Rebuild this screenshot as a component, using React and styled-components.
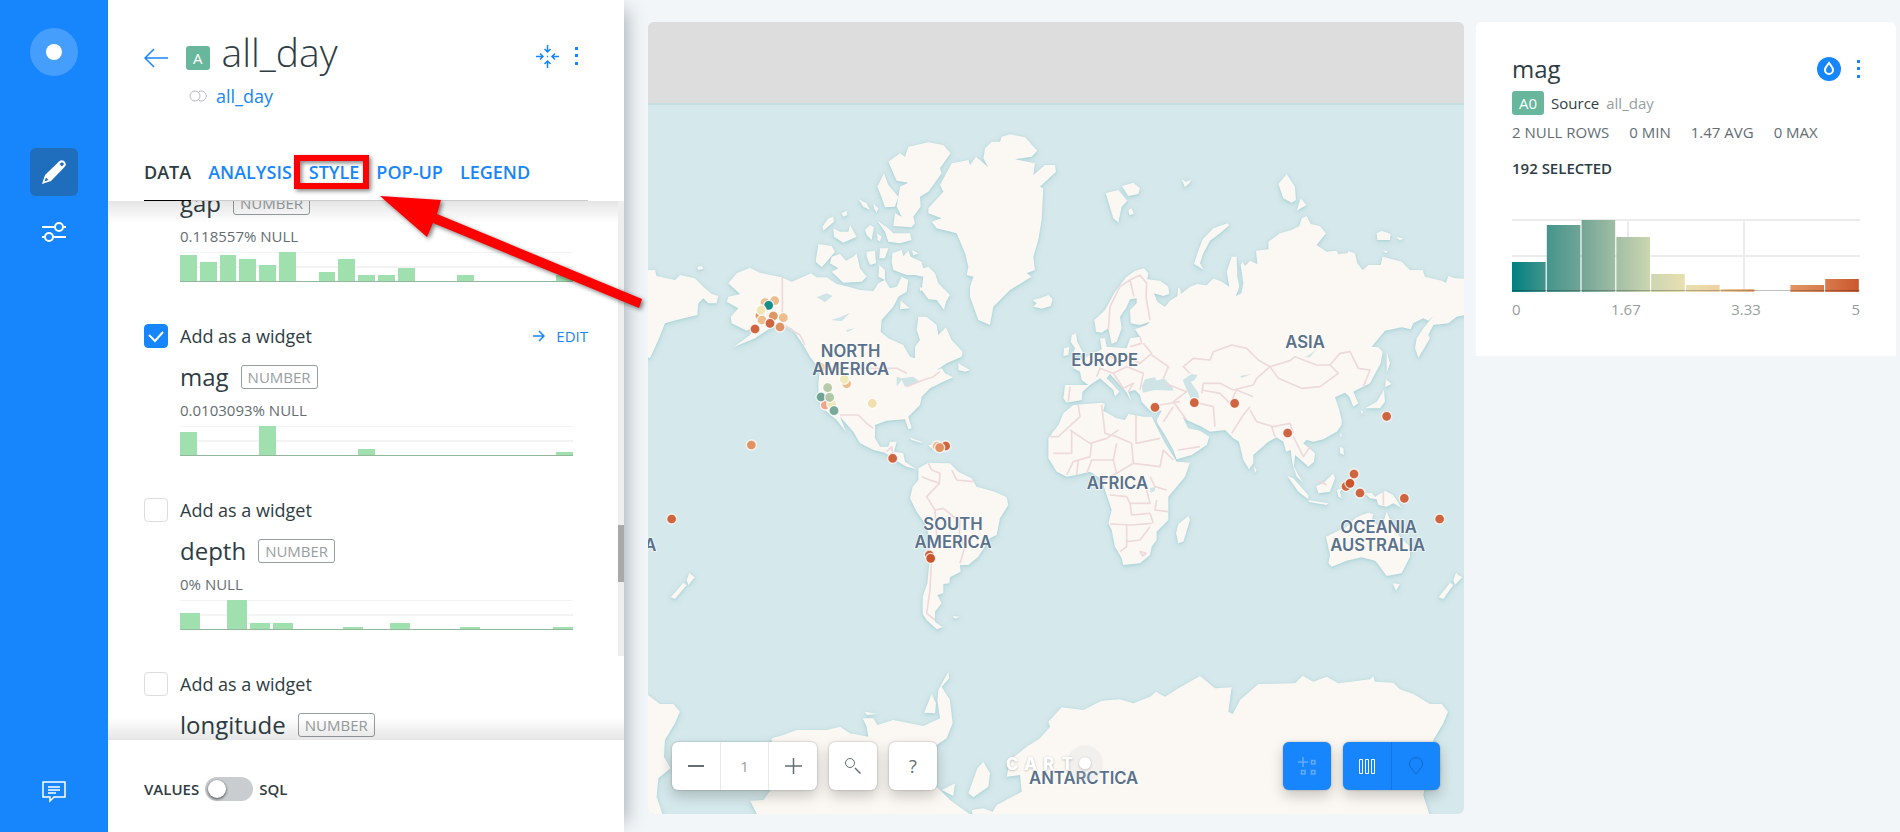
import React, { useState } from 'react';
import styled, { createGlobalStyle, css } from 'styled-components';

const GlobalStyle = createGlobalStyle`
  * {
    box-sizing: border-box;
  }

  body {
    margin: 0;
    background: #f2f6f9;
    color: #2e3c43;
    font-family: "Open Sans", "Noto Sans", sans-serif;
    font-size: 15px;
    line-height: 24px;
  }

  button, input {
    font: inherit;
  }

  a {
    color: #1785fb;
    text-decoration: none;
  }
`;

const Page = styled.div`
  position: relative;
  display: flex;
  height: 100vh;
  overflow: hidden;
`;

const Sidebar = styled.nav`
  display: flex;
  flex-direction: column;
  align-items: center;
  width: 108px;
  padding: 28px 0 4px;
  background: #1785fb;
`;

const Avatar = styled.a`
  display: flex;
  align-items: center;
  justify-content: center;
  width: 48px;
  height: 48px;
  margin-bottom: 72px;
  border-radius: 50%;
  background: #459dfc;

  &::after {
    content: '';
    width: 16px;
    height: 16px;
    border-radius: 50%;
    background: #fff;
  }
`;

const SideButton = styled.button`
  display: flex;
  align-items: center;
  justify-content: center;
  width: 48px;
  height: 48px;
  margin-bottom: 12px;
  margin-top: ${({ $last }) => ($last ? 'auto' : '0')};
  padding: 0;
  border: 0;
  border-radius: 6px;
  background: ${({ $active }) => ($active ? '#1f6dbd' : 'transparent')};
  cursor: pointer;
`;

const Panel = styled.section`
  position: relative;
  display: flex;
  flex-direction: column;
  width: 516px;
  background: #fff;
  box-shadow: 12px 0 18px -10px rgba(46, 60, 67, 0.4);
`;

const PanelHeader = styled.header`
  padding: 30px 36px 0;
`;

const TitleRow = styled.div`
  display: flex;
  align-items: center;
  height: 56px;
`;

const IconButton = styled.button`
  display: flex;
  padding: 0;
  border: 0;
  background: none;
  cursor: pointer;
`;

const Actions = styled.div`
  display: flex;
  align-items: center;
  gap: 16px;
  margin-left: auto;
`;

const LayerActions = styled(Actions)`
  padding: 0 10px 4px 0;
`;

const Badge = styled.span`
  height: 24px;
  padding: 0 7px;
  border-radius: 3px;
  background: #68b69c;
  color: #fff;
  line-height: 24px;
`;

const Title = styled.h1`
  margin: 0 0 12px 12px;
  font-size: 39px;
  font-weight: 300;
  line-height: 44px;
`;

const SourceRow = styled.div`
  display: flex;
  align-items: center;
  gap: 9px;
  padding-left: 45px;
  font-size: 18px;
  line-height: 20px;
`;

const Tabs = styled.div`
  display: flex;
  gap: 17px;
  height: 54px;
  margin-top: 41px;
  border-bottom: 1px solid #ccc;
`;

const Tab = styled.button`
  height: 54px;
  padding: 0 0 4px;
  border: 0;
  border-bottom: 1px solid ${({ $active }) => ($active ? '#000' : 'transparent')};
  background: none;
  color: ${({ $active }) => ($active ? '#2e3c43' : '#1785fb')};
  font-size: 18px;
  font-weight: 600;
  cursor: pointer;
`;

const ScrollArea = styled.div`
  position: relative;
  flex: 1;
  min-height: 0;
  overflow: hidden;

  &::before,
  &::after {
    content: '';
    position: absolute;
    left: 0;
    right: 0;
    height: 22px;
  }

  &::before {
    top: 0;
    background: linear-gradient(rgba(0, 0, 0, 0.1), transparent);
  }

  &::after {
    bottom: 0;
    background: linear-gradient(transparent, rgba(0, 0, 0, 0.1));
  }
`;

const ScrollTrack = styled.div`
  position: absolute;
  top: 0;
  right: 0;
  width: 6px;
  height: 455px;
  padding-top: 324px;
  background: #eee;

  &::after {
    content: '';
    display: block;
    height: 57px;
    background: #a9a9a9;
  }
`;

/* starts scrolled past the top of the first column */
const ColumnList = styled.ul`
  margin: -27px 0 0;
  padding: 0 36px;
  list-style: none;
`;

const Column = styled.li`
  padding-bottom: 42px;
`;

const WidgetToggle = styled.div`
  display: flex;
  align-items: center;
  gap: 12px;
  height: 24px;
  font-size: 18px;
`;

const Checkbox = styled.input`
  appearance: none;
  width: 24px;
  height: 24px;
  margin: 0;
  border: 1px solid #ddd;
  border-radius: 4px;
  background: #fff;

  &:checked {
    border-color: #1785fb;
    background: #1785fb url("data:image/svg+xml,%3Csvg xmlns='http://www.w3.org/2000/svg' viewBox='0 0 24 24'%3E%3Cpath d='M5 11l6 6 8-9' fill='none' stroke='white' stroke-width='2'/%3E%3C/svg%3E") center / 24px no-repeat;
  }
`;

const EditLink = styled.a`
  display: flex;
  align-items: center;
  gap: 11px;
  margin-left: auto;
  font-size: 15px;
`;

const ColumnBody = styled.div`
  padding: 12px 15px 0 36px;
`;

const ColumnName = styled.h2`
  display: flex;
  align-items: center;
  gap: 12px;
  height: 34px;
  margin: 0;
  font-size: 24px;
  font-weight: 400;
`;

const TypeTag = styled.span`
  height: 24px;
  padding: 0 6px;
  border: 1px solid #979ea1;
  border-radius: 3px;
  color: #979ea1;
  font-size: 15px;
  line-height: 22px;
`;

const NullRate = styled.p`
  margin: 0;
  color: #636d72;
  line-height: 32px;
`;

const MiniChart = styled.div`
  display: flex;
  align-items: flex-end;
  gap: 3px;
  height: 30px;
  border-bottom: 1px solid #92b79b;
  background: linear-gradient(#f3f3f3, #f3f3f3) 0 0 / 100% 1px no-repeat,
    linear-gradient(#f3f3f3, #f3f3f3) 0 14px / 100% 2px no-repeat;
`;

const MiniBar = styled.span`
  flex: 1;
  background: #9fe0ae;
`;

const PanelFooter = styled.footer`
  display: flex;
  align-items: center;
  gap: 6px;
  height: 92px;
  padding: 6px 36px 0;
  font-weight: 600;
`;

const Switch = styled.input`
  appearance: none;
  display: flex;
  align-items: center;
  width: 48px;
  height: 24px;
  margin: 0;
  padding: 0 3px;
  border-radius: 12px;
  background: #c9cdd0;

  &::after {
    content: '';
    width: 18px;
    height: 18px;
    border-radius: 50%;
    background: #fff;
    box-shadow: 0 1px 3px rgba(0, 0, 0, 0.7);
  }

  &:checked {
    justify-content: flex-end;
  }
`;

const Canvas = styled.main`
  display: flex;
  flex: 1;
  align-items: stretch;
  gap: 12px;
  min-width: 0;
  padding: 22px 4px 18px 24px;
`;

const MapCard = styled.div`
  position: relative;
  flex: 1;
  min-width: 0;
  overflow: hidden;
  border-radius: 6px;
  background: #d5e8eb;
`;

const WorldMap = styled.svg`
  display: block;
  width: 100%;
  height: 100%;

  .land {
    fill: #fbf8f3;
    filter: drop-shadow(0 2px 3px #a9d2d8) drop-shadow(0 4px 8px #b9dade);
  }

  .lake {
    fill: #cfe4e7;
  }

  .borders {
    fill: none;
    stroke: #eed9db;
    stroke-width: 5px;
    stroke-linejoin: round;
  }

  .labels {
    fill: #5a718b;
    stroke: #fff;
    stroke-width: 5px;
    stroke-opacity: 0.7;
    paint-order: stroke;
    font: 600 50px Inter, sans-serif;
    text-anchor: middle;
  }

  .logo {
    fill: #fff;
    font: 800 50px Inter, sans-serif;
    filter: drop-shadow(0 2px 3px rgba(0, 0, 0, 0.25));
  }
`;

const MapControls = styled.div`
  position: absolute;
  right: 24px;
  bottom: 24px;
  left: 24px;
  display: flex;
  gap: 12px;
`;

const ControlGroup = styled.div`
  display: flex;
  border-radius: 6px;
  box-shadow: 0 6px 14px rgba(0, 0, 0, 0.2), 0 0 2px rgba(0, 0, 0, 0.3);
  background: ${({ $blue }) => ($blue ? '#1785fb' : '#fff')};
  margin-left: ${({ $push }) => ($push ? 'auto' : '0')};
`;

const controlBox = css`
  display: flex;
  align-items: center;
  justify-content: center;
  width: 48px;
  height: 48px;
  padding: 0;
  color: #636d72;

  & + & {
    width: 49px;
    border-left: 1px solid rgba(0, 0, 0, 0.1);
  }
`;

const Control = styled.button`
  ${controlBox}
  border: 0;
  background: none;
  font-size: 18px;
  cursor: pointer;
`;

const ZoomLevel = styled.output`
  ${controlBox}
  width: 49px;
  border: solid #e8e8e8;
  border-width: 0 1px;
  color: #979ea1;
`;

const WidgetCard = styled.article`
  align-self: flex-start;
  width: 420px;
  height: 334px;
  padding: 32px 36px;
  border-radius: 6px 6px 0 0;
  background: #fff;
`;

const WidgetHead = styled.div`
  display: flex;
  align-items: center;
  height: 30px;
`;

const WidgetTitle = styled.h2`
  margin: 0;
  font-size: 24px;
  font-weight: 400;
`;

const WidgetSource = styled.div`
  display: flex;
  gap: 7px;
  margin-top: 7px;
`;

const Muted = styled.span`
  color: #979ea1;
`;

const Stats = styled.ul`
  display: flex;
  gap: 20px;
  margin: 5px 0 12px;
  padding: 0;
  color: #636d72;
  list-style: none;
`;

const Selected = styled.p`
  margin: 0 0 39px;
  font-weight: 600;
`;

const Histogram = styled.svg`
  display: block;
  width: 100%;
`;

const Axis = styled.div`
  display: flex;
  justify-content: space-between;
  padding-top: 5px;
  color: #979ea1;
`;

const Annotation = styled.svg`
  position: absolute;
  top: 0;
  left: 0;
  width: 648px;
  height: 320px;
  pointer-events: none;
  filter: drop-shadow(2px 2px 2px rgba(0, 0, 0, 0.5));
`;

const columns = [
  { name: 'gap', nulls: '0.118557%', scrolledOff: true, bars: [26, 19, 26, 22, 16, 29, 0, 9, 22, 6, 6, 13, 0, 0, 6, 0, 0, 0, 0, 6] },
  { name: 'mag', nulls: '0.0103093%', widget: true, bars: [23, 0, 0, 0, 29, 0, 0, 0, 0, 6, 0, 0, 0, 0, 0, 0, 0, 0, 0, 3] },
  { name: 'depth', nulls: '0%', widget: false, bars: [16, 0, 29, 6, 6, 0, 0, 2, 0, 6, 0, 0, 2, 0, 0, 0, 2] },
  { name: 'longitude', widget: false },
];

const magBars = [30, 67, 72, 55, 18, 7, 3, 0, 7, 13];

const magRamp = ['#008080', '#45958c', '#72a596', '#a2bea5', '#cdd6b1', '#e9dfb1', '#eed0a0', '#e8b07f', '#e19562', '#d87a4d', '#ca562c'];

const land = [
  // North America
  'M265 580L290 550 330 533 360 548 425 562 455 575 490 560 513 550 530 562 560 562 590 582 625 590 660 600 700 603 715 580 735 570 750 595 770 590 785 560 805 570 800 605 775 620 760 650 725 690 722 725 745 745 790 765 810 800 825 805 825 770 840 750 830 720 835 680 860 680 890 705 895 735 918 712 935 750 968 785 965 800 920 820 890 840 905 835 915 850 940 862 900 880 870 895 845 920 840 945 805 980 815 1015 805 1018 795 988 740 992 705 1005 705 1045 720 1070 745 1070 750 1055 770 1055 762 1085 790 1090 795 1115 830 1138 800 1130 765 1110 735 1088 700 1080 660 1060 640 1025 600 980 618 1025 590 990 560 965 535 930 535 880 540 840 510 800 490 765 455 715 420 705 390 715 345 745 280 772 330 735 350 705 320 722 275 700 272 680 295 655 260 635 265 620 300 612Z',
  // Greenland
  'M865 355L910 305 900 285 935 220 985 210 990 225 1008 200 1045 232 1030 205 1035 175 1055 155 1080 155 1085 140 1110 133 1155 142 1192 182 1175 200 1125 208 1185 220 1180 255 1215 225 1245 225 1248 245 1200 290 1210 295 1205 390 1195 450 1180 500 1185 540 1160 550 1175 560 1110 600 1060 650 1050 705 1015 690 990 620 990 590 1000 560 980 555 985 530 975 490 950 430 890 415 875 395 905 385 865 370Z',
  // Arctic islands
  'M745 215L780 190 795 200 805 170 865 157 910 165 932 190 900 235 905 250 880 285 865 305 840 320 842 350 820 380 825 400 815 412 760 408 765 370 785 380 770 350 780 290 805 278 770 272Z',
  'M732 250L745 285 775 320 765 350 735 352 722 315 712 290Z',
  'M655 327L680 340 690 360 670 350ZM700 340L715 355 710 368 702 355ZM580 380L582 395 550 422 547 410 565 385ZM580 415L600 425 625 425 630 405 650 440 610 458 582 440ZM675 420L690 405 702 412 695 450 680 435ZM712 392L745 415 760 430 810 430 815 450 780 460 745 455 735 425ZM712 430L725 440 720 455 712 450ZM605 370L620 362 622 375 610 380ZM172 530L185 528 190 536 175 540Z',
  'M535 462L575 468 585 485 560 515 545 532 527 515ZM575 500L600 492 618 512 640 500 650 490 660 535 680 560 665 575 610 578 575 545 595 535 570 520ZM680 485L705 482 708 520 690 525 680 500ZM720 475L745 475 735 505 718 505ZM718 525L735 540 735 570 715 560ZM815 480L835 490 820 496Z',
  'M757 490L785 480 790 498 805 482 812 500 845 515 850 535 865 530 885 550 895 580 930 615 918 635 912 660 890 630 865 628 845 600 850 560 825 555 800 555 760 540 755 515ZM782 632L810 655 780 658ZM838 590L848 595 842 605Z',
  'M1178 630L1200 625 1225 615 1238 628 1232 648 1205 656 1180 650 1190 640ZM955 820L990 840 975 845 955 840Z',
  // Caribbean
  'M808 1042L845 1055 848 1060 815 1050ZM865 1065L900 1065 890 1078 870 1072Z',
  // South America
  'M835 1135L865 1118 930 1120 955 1145 995 1165 1010 1190 1065 1205 1100 1222 1105 1245 1080 1285 1070 1335 1050 1345 1015 1400 985 1425 960 1425 962 1445 930 1462 928 1480 910 1482 910 1510 892 1515 905 1540 885 1565 885 1595 908 1612 890 1618 860 1590 848 1572 848 1520 862 1480 870 1400 868 1340 855 1300 830 1265 810 1225 818 1190 835 1170Z',
  'M938 1578L960 1580 945 1586Z',
  // Far east past the date line
  'M0 540L45 540 50 558 105 570 120 555 165 565 190 590 215 612 235 618 230 640 205 640 190 625 175 640 172 675 110 690 75 700 55 750 30 805 0 790Z',
  // New Zealand
  'M148 1448L155 1455 165 1462 145 1485 140 1470ZM130 1478L140 1485 105 1527 92 1522ZM2448 1448L2455 1455 2467 1462 2445 1485 2440 1470ZM2430 1478L2440 1485 2410 1527 2396 1522Z',
  // Eurasia
  'M1368 725L1363 690 1395 660 1425 605 1458 562 1485 542 1512 535 1525 550 1522 568 1560 572 1585 590 1588 612 1570 618 1542 610 1552 635 1575 650 1590 632 1612 618 1614 590 1622 600 1622 612 1650 590 1672 582 1700 586 1720 565 1745 575 1768 590 1760 545 1775 500 1790 500 1792 560 1798 590 1788 618 1804 610 1810 580 1802 525 1808 515 1815 528 1830 512 1852 522 1848 482 1885 478 1885 455 1920 430 1955 420 1978 408 1985 385 2000 378 2012 402 2040 408 2058 430 2030 465 2060 485 2090 482 2095 492 2122 490 2125 483 2145 490 2152 520 2168 540 2185 525 2222 525 2228 500 2285 515 2310 540 2348 540 2355 560 2405 572 2418 578 2425 558 2445 565 2490 566 2490 672 2450 680 2425 700 2380 705 2365 735 2370 745 2355 770 2335 803 2325 775 2330 745 2350 715 2380 678 2365 692 2350 685 2320 700 2312 718 2285 712 2235 722 2195 770 2215 772 2228 785 2222 820 2190 880 2160 895 2140 905 2155 940 2140 950 2128 920 2115 908 2085 922 2095 950 2105 990 2105 1005 2090 1025 2050 1048 2020 1055 2000 1050 1990 1060 2025 1090 2022 1115 2005 1130 1985 1112 1965 1095 1962 1130 1975 1155 1990 1178 1970 1160 1957 1120 1952 1080 1938 1085 1930 1055 1910 1042 1885 1055 1840 1095 1840 1120 1827 1138 1810 1110 1797 1055 1780 1045 1755 1020 1710 1025 1685 1010 1640 990 1628 980 1645 1015 1680 1022 1708 1040 1700 1065 1655 1095 1610 1108 1600 1080 1575 1035 1552 1000 1550 990 1565 962 1530 962 1505 935 1500 915 1485 900 1465 905 1475 935 1458 905 1435 880 1410 852 1400 865 1415 880 1438 905 1425 920 1420 900 1380 865 1350 885 1328 905 1325 930 1280 938 1270 925 1275 885 1345 885 1325 870 1320 845 1300 835 1310 815 1350 795 1385 778 1380 745 1395 745 1400 770 1460 775 1470 745 1500 740 1485 718 1520 705 1530 695 1500 705 1472 700 1470 660 1490 640 1490 625 1470 628 1458 655 1440 680 1445 715 1430 755 1415 762 1405 715 1385 728Z',
  // British Isles
  'M1295 735L1308 730 1312 755 1330 790 1295 800 1305 775 1292 755ZM1272 775L1288 770 1285 795 1270 798Z',
  // Svalbard and Russian Arctic
  'M1397 310L1435 300 1462 332 1445 350 1435 398 1420 385ZM1445 288L1480 278 1500 295 1495 312 1465 318ZM1465 360L1475 355 1482 372 1468 375ZM1625 268L1638 275 1655 268 1648 280 1635 292Z',
  'M1762 400L1768 406 1740 430 1710 452 1690 490 1680 520 1692 540 1662 522 1672 490 1688 448 1720 415Z',
  'M1915 282L1940 252 1965 290 1968 330 1955 338 1930 325ZM1982 325L2000 345 1970 362ZM2210 430L2225 422 2252 432 2250 450 2212 450ZM2268 440L2290 445 2280 452ZM2228 482L2245 482 2238 490Z',
  // Japan and Sakhalin
  'M2240 785L2250 820 2240 850ZM2238 868L2255 882 2235 892ZM2232 900L2235 935 2220 955 2175 955 2210 935ZM2162 960L2170 965 2165 975ZM2100 1030L2106 1035 2102 1045Z',
  // South-east Asia
  'M1942 1158L1960 1165 2005 1215 2005 1228 1975 1205ZM2005 1230L2065 1240 2060 1245 2008 1236ZM2028 1188L2050 1180 2080 1150 2085 1165 2070 1205 2035 1210ZM2100 1070L2110 1075 2112 1095 2100 1090ZM2090 1200L2115 1190 2100 1205 2105 1225 2095 1220ZM2175 1210L2195 1208 2205 1220 2235 1202 2260 1215 2285 1255 2260 1240 2240 1250 2215 1245 2210 1228 2190 1225ZM1842 1130L1850 1140 1845 1150Z',
  // Australia
  'M2058 1340L2120 1310 2145 1285 2165 1275 2185 1268 2200 1272 2195 1295 2225 1310 2240 1265 2255 1300 2280 1340 2310 1370 2310 1400 2285 1450 2240 1458 2212 1420 2205 1412 2165 1402 2120 1412 2075 1430 2065 1420 2070 1395ZM2258 1480L2280 1482 2268 1502Z',
  // Africa
  'M1270 970L1300 945 1385 938 1395 942 1390 962 1430 985 1455 990 1465 972 1510 980 1535 980 1545 1000 1575 1060 1610 1115 1650 1118 1635 1160 1585 1220 1585 1290 1550 1325 1550 1350 1535 1370 1530 1395 1500 1420 1450 1425 1445 1405 1425 1370 1415 1320 1405 1300 1415 1260 1400 1215 1390 1185 1380 1165 1350 1145 1310 1155 1280 1160 1250 1145 1225 1105 1225 1045 1255 1005Z',
  'M1645 1278L1650 1290 1630 1355 1615 1360 1608 1330 1615 1302Z',
  // Antarctica
  'M0 1810L24 1815 60 1842 100 1842 120 1865 105 1900 75 1950 72 2000 92 2035 55 2065 50 2120 70 2180 0 2180ZM355 2180L330 2132 370 2130 392 2100 395 1945 430 1935 470 1920 560 1920 600 1910 630 1930 685 1940 680 1910 668 1885 700 1885 712 1905 760 1890 850 1908 900 1885 892 1830 895 1800 925 1745 928 1765 905 1790 930 1830 938 1900 920 1945 890 1965 850 2050 930 2130 1000 2180ZM675 1865L712 1872 680 1875ZM875 1812L888 1840 885 1870 852 1868ZM905 2100L945 2080 940 2118ZM1030 2015L1050 2050 1045 2090 1000 2122 985 2110 1012 2035ZM1000 2180L995 2160 1030 2155 1058 2165 1070 2145 1145 2105 1140 2055 1100 2060 1110 2010 1160 1970 1200 1945 1230 1910 1225 1895 1265 1852 1330 1860 1385 1832 1440 1828 1480 1840 1530 1820 1548 1805 1575 1820 1615 1795 1680 1758 1725 1795 1775 1792 1765 1865 1778 1872 1800 1830 1855 1782 1965 1780 1988 1757 2020 1775 2060 1760 2095 1780 2190 1768 2200 1758 2205 1775 2260 1778 2280 1798 2320 1812 2370 1842 2405 1842 2424 1865 2410 1900 2380 1950 2378 2000 2400 2035 2355 2090 2350 2115 2370 2180Z',
];

const lakes = [
  'M1505 890L1515 868 1545 862 1550 872 1572 865 1598 892 1600 902 1545 900 1508 908Z',
  'M1628 870L1655 852 1672 855 1665 870 1652 875 1675 908 1678 925 1655 930 1640 900Z',
  'M530 622L560 610 578 618 555 636ZM572 690L600 682 630 668 605 694ZM618 720L645 715 622 726ZM770 860L785 865 820 860 840 875 795 890 785 870 770 890Z',
  'M1995 802L2015 790 2030 778 2010 802ZM1800 858L1835 852 1805 864ZM1530 1195L1545 1190 1545 1202 1532 1208Z',
];

const borders =
  'M427 562V700L455 720 480 735 495 765M545 835H770L800 850M800 890L850 870 880 860 900 845M600 975L655 975 680 1000 700 1015M740 1085L755 1070 760 1110' +
  'M865 1120L875 1140 900 1150 898 1180 870 1170 845 1160M898 1180L860 1220 885 1260 910 1255 940 1280 960 1290 958 1340 975 1370 960 1420M885 1260L890 1340 905 1360M875 1400L870 1500 860 1570 885 1590M935 1140L950 1170 1000 1175' +
  'M1405 720L1410 650 1440 590 1470 570 1482 620M1470 570L1500 555 1520 580 1518 620 1530 690M1500 740L1505 760 1470 770M1510 760L1535 790 1500 820 1460 800M1535 795L1585 830 1570 865M1370 860L1380 835 1420 850 1460 830 1510 850 1500 900M1420 850L1450 895 1480 880 1465 905M1440 820L1400 790M1290 890L1285 935' +
  'M1650 850L1630 830 1660 805 1710 810 1720 785 1775 765 1820 775 1855 810 1890 830 1850 865 1840 885 1780 900 1740 880 1690 880 1685 910M1890 830L1950 812 1965 800 2030 825 2070 825 2100 790 2130 785 2155 835 2190 840 2170 890M1890 830L1915 865 1985 895 2040 890 2095 850 2070 825' +
  'M1575 880L1640 905 1600 935 1640 990M1560 945L1620 935M1570 995L1600 950M1685 900L1740 910 1770 940 1790 900 1840 920M1680 940L1720 950 1725 1010M1775 1030L1810 975 1830 950M1830 960L1850 995 1900 1010 1950 1000 1960 1030M1895 1010L1905 1040M1960 1040L1990 1100 2010 1070M1615 1080L1680 1070M2030 1170L2060 1185M2230 1205V1245' +
  'M1230 1040L1255 1040 1320 980 1315 945M1290 1020L1350 1060 1400 1045 1435 1020M1385 945L1395 1030 1430 1040 1475 1060M1488 975V1060L1560 1045M1295 1020L1295 1090 1240 1090M1355 1060L1350 1100 1300 1115 1280 1155M1340 1150L1355 1110 1420 1110 1430 1060M1475 1060L1480 1120 1430 1150 1390 1170M1480 1120L1560 1130 1570 1080 1600 1110M1420 1110L1430 1150M1310 1155L1315 1110M1520 1200L1530 1240 1470 1240 1460 1220 1410 1215M1530 1160L1545 1190 1580 1200M1470 1240L1475 1275 1530 1270 1540 1300M1410 1302L1475 1305 1535 1300M1460 1305L1460 1370 1440 1385M1460 1355L1500 1350 1530 1310M1550 1230L1545 1260 1585 1265M1500 1385L1518 1390 1508 1398Z';

const quakes = [
  [404, 632, '#eebd8e'], [375, 638, '#eebd8e'], [360, 677, '#e19562'], [400, 678, '#e19562'], [366, 690, '#eebd8e'],
  [386, 646, '#178c89'], [363, 660, '#f1e5b3'], [430, 683, '#eebd8e'], [390, 700, '#cf6440'], [420, 711, '#de9067'], [345, 717, '#cf6440'],
  [543, 832, '#f4d3ad'], [620, 881, '#eebd8e'], [613, 868, '#f1e9b8'], [697, 940, '#f1dfae'],
  [563, 893, '#b7cba9'], [556, 945, '#f0a58a'], [575, 942, '#f1e9b8'], [543, 921, '#70a494'], [569, 922, '#b0c6a5'], [582, 962, '#78a897'],
  [334, 1065, '#e09263'], [917, 1068, '#cf6440'], [891, 1068, '#eebd8e'], [899, 1073, '#e09263'], [758, 1105, '#cf6440'],
  [95, 1287, '#cf6440'], [868, 1395, '#cf6440'], [872, 1405, '#c8552c'],
  [1545, 952, '#cf6440'], [1663, 938, '#cf6440'], [1784, 940, '#cf6440'], [2240, 979, '#cf6440'], [1943, 1029, '#cf6440'],
  [2142, 1152, '#cf6440'], [2118, 1189, '#cf6440'], [2130, 1180, '#c8552c'], [2160, 1209, '#cf6440'], [2293, 1225, '#cf6440'], [2399, 1287, '#cf6440'],
];

const labels = [
  ['NORTH', 632, 800], ['AMERICA', 632, 855], ['EUROPE', 1394, 828], ['ASIA', 1995, 775], ['AFRICA', 1432, 1197],
  ['SOUTH', 939, 1320], ['AMERICA', 939, 1375], ['OCEANIA', 2216, 1329], ['AUSTRALIA', 2213, 1382], ['ANTARCTICA', 1331, 2082], ['A', 31, 1382],
];

function DotsIcon() {
  return (
    <svg width="3" height="18" fill="#1785fb" aria-hidden="true">
      <path d="M0 0h3v3H0zM0 7h3v3H0zM0 15h3v3H0z" />
    </svg>
  );
}

function ColumnToggle({ column }) {
  const [checked, setChecked] = useState(column.widget);
  const id = `widget-${column.name}`;

  return (
    <WidgetToggle>
      <Checkbox id={id} type="checkbox" checked={checked} onChange={() => setChecked(!checked)} />
      <label htmlFor={id}>Add as a widget</label>
      {checked && (
        <EditLink href="#edit">
          <svg width="12" height="12" fill="none" stroke="currentColor" strokeWidth="1.5" aria-hidden="true">
            <path d="M0 6h11M6 1l5 5-5 5" />
          </svg>
          EDIT
        </EditLink>
      )}
    </WidgetToggle>
  );
}

function ColumnItem({ column }) {
  return (
    <Column>
      {!column.scrolledOff && <ColumnToggle column={column} />}
      <ColumnBody>
        <ColumnName>
          {column.name}
          <TypeTag>NUMBER</TypeTag>
        </ColumnName>
        {column.bars && (
          <>
            <NullRate>{column.nulls} NULL</NullRate>
            <MiniChart>
              {column.bars.map((height, index) => (
                <MiniBar key={index} style={{ height }} />
              ))}
            </MiniChart>
          </>
        )}
      </ColumnBody>
    </Column>
  );
}

function EarthquakeMap() {
  return (
    <WorldMap viewBox="24 -204 2448 2376" preserveAspectRatio="xMidYMid slice" role="img" aria-label="Earthquakes of the last day">
      <rect x="-2000" y="-204" width="6500" height="243" fill="#ddd" />
      <rect x="-2000" y="39" width="6500" height="6" fill="#c3dfe2" />
      <g className="land">
        {land.map((d) => (
          <path key={d} d={d} />
        ))}
      </g>
      <g className="lake">
        {lakes.map((d) => (
          <path key={d} d={d} />
        ))}
      </g>
      <path className="borders" d={borders} />
      {quakes.map(([x, y, color]) => (
        <circle key={`${x}-${y}`} cx={x} cy={y} r="15" fill={color} stroke="#fff" strokeWidth="4" strokeOpacity="0.8" />
      ))}
      <g className="labels">
        {labels.map(([text, x, y]) => (
          <text key={`${x}-${y}`} x={x} y={y}>
            {text}
          </text>
        ))}
      </g>
      <circle cx="1335" cy="2020" r="54" fill="#cccccc" fillOpacity="0.18" />
      <g className="logo">
        <text x="1098 1153 1210 1265" y="2039">CART</text>
        <circle cx="1335" cy="2020" r="18" />
      </g>
    </WorldMap>
  );
}

function MagWidget() {
  return (
    <WidgetCard>
      <WidgetHead>
        <WidgetTitle>mag</WidgetTitle>
        <Actions>
          <IconButton aria-label="Style by value">
            <svg width="24" height="24">
              <circle cx="12" cy="12" r="12" fill="#1785fb" />
              <path d="M12 6c2 3 4 4 4 7a4 4 0 0 1-8 0c0-3 2-4 4-7z" fill="none" stroke="#fff" strokeWidth="2" />
            </svg>
          </IconButton>
          <IconButton aria-label="Widget options">
            <DotsIcon />
          </IconButton>
        </Actions>
      </WidgetHead>
      <WidgetSource>
        <Badge>A0</Badge>
        <span>Source</span>
        <Muted>all_day</Muted>
      </WidgetSource>
      <Stats>
        <li>2 NULL ROWS</li>
        <li>0 MIN</li>
        <li>1.47 AVG</li>
        <li>0 MAX</li>
      </Stats>
      <Selected>192 SELECTED</Selected>
      <Histogram viewBox="0 0 348 73">
        <defs>
          <linearGradient id="ramp" gradientUnits="userSpaceOnUse" x1="0" x2="348" y1="0" y2="0">
            {magRamp.map((color, index) => (
              <stop key={color} offset={index / 10} stopColor={color} />
            ))}
          </linearGradient>
        </defs>
        <path d="M0 1h348M0 37h348M116 1v71M232 1v71" stroke="#ececec" strokeWidth="2" />
        {magBars.map((height, index) => (
          <rect key={index} x={index * 34.8} y={73 - height} width="33.6" height={height} fill="url(#ramp)" />
        ))}
        <path d="M0 71.5h348" stroke="#000" strokeOpacity="0.25" />
      </Histogram>
      <Axis>
        <span>0</span>
        <span>1.67</span>
        <span>3.33</span>
        <span>5</span>
      </Axis>
    </WidgetCard>
  );
}

function App() {
  const [tab, setTab] = useState('DATA');

  return (
    <Page>
      <GlobalStyle />
      <Sidebar>
        <Avatar href="#home" aria-label="Home" />
        <SideButton $active aria-label="Edit layers">
          <svg width="24" height="24" viewBox="0 0 24 24" fill="#fff">
            <path d="M0 24L3 15 17 1.500Q20-1 22.500 1.500 25 4 22.500 7L9 21z" />
            <path d="M2.500 21.500L4 17.500 6.500 20z" fill="#1f6dbd" />
            <path d="M17.500 4l2-1.500q2-.5 2.500 1.500l-2 2.500z" fill="#1f6dbd" />
          </svg>
        </SideButton>
        <SideButton aria-label="Map settings">
          <svg width="24" height="20" fill="none" stroke="#fff" strokeWidth="2">
            <path d="M0 5h12M22 5h2M0 15h2M12 15h12" />
            <circle cx="17" cy="5" r="4" />
            <circle cx="7" cy="15" r="4" />
          </svg>
        </SideButton>
        <SideButton $last aria-label="Feedback">
          <svg width="24" height="22" fill="none" stroke="#fff" strokeWidth="1.5">
            <path d="M1 1h22v15H12l-4 4v-4H1zM6 6h12M6 9h12M6 12h8" />
          </svg>
        </SideButton>
      </Sidebar>

      <Panel>
        <PanelHeader>
          <TitleRow>
            <IconButton aria-label="Back">
              <svg width="42" height="20" fill="none" stroke="#1785fb" strokeWidth="1.5">
                <path d="M24 10H1M10 1L1 10l9 9" />
              </svg>
            </IconButton>
            <Badge>A</Badge>
            <Title>all_day</Title>
            <LayerActions>
              <IconButton aria-label="Center on layer">
                <svg width="23" height="23" fill="none" stroke="#1785fb" strokeWidth="1.5">
                  <path d="M11.5 0v7M8.500 4l3 3 3-3M11.5 23v-7M8.500 19l3-3 3 3M0 11.5h7M4 8.500l3 3-3 3M23 11.5h-7M19 8.500l-3 3 3 3M11 11.5h1" />
                </svg>
              </IconButton>
              <IconButton aria-label="Layer options">
                <DotsIcon />
              </IconButton>
            </LayerActions>
          </TitleRow>
          <SourceRow>
            <svg width="18" height="12" fill="none" stroke="#b5babd" aria-hidden="true">
              <circle cx="6" cy="6" r="5" />
              <path d="M10 1.5a5 5 0 1 1 0 9" />
            </svg>
            <a href="#all_day">all_day</a>
          </SourceRow>
          <Tabs role="tablist">
            {['DATA', 'ANALYSIS', 'STYLE', 'POP-UP', 'LEGEND'].map((name) => (
              <Tab key={name} role="tab" $active={tab === name} aria-selected={tab === name} onClick={() => setTab(name)}>
                {name}
              </Tab>
            ))}
          </Tabs>
        </PanelHeader>
        <ScrollArea>
          <ColumnList>
            {columns.map((column) => (
              <ColumnItem key={column.name} column={column} />
            ))}
          </ColumnList>
          <ScrollTrack />
        </ScrollArea>
        <PanelFooter>
          <label htmlFor="sql-switch">VALUES</label>
          <Switch id="sql-switch" type="checkbox" role="switch" />
          <label htmlFor="sql-switch">SQL</label>
        </PanelFooter>
      </Panel>

      <Canvas>
        <MapCard>
          <EarthquakeMap />
          <MapControls>
            <ControlGroup>
              <Control aria-label="Zoom out">
                <svg width="16" height="16" stroke="#636d72" strokeWidth="2">
                  <path d="M0 8h16" />
                </svg>
              </Control>
              <ZoomLevel>1</ZoomLevel>
              <Control aria-label="Zoom in">
                <svg width="17" height="16" stroke="#636d72" strokeWidth="1.5">
                  <path d="M0 8h17M8.5 0v16" />
                </svg>
              </Control>
            </ControlGroup>
            <ControlGroup>
              <Control aria-label="Search">
                <svg width="16" height="16" fill="none" stroke="#636d72">
                  <circle cx="5" cy="5" r="4.5" />
                  <path d="M10 10l5.5 5.5" strokeWidth="1.5" />
                </svg>
              </Control>
            </ControlGroup>
            <ControlGroup>
              <Control>?</Control>
            </ControlGroup>
            <ControlGroup $blue $push>
              <Control aria-label="Toggle filters">
                <svg width="18" height="18" fill="none" stroke="#62acff" strokeWidth="1.5">
                  <path d="M0 5h10M5 0v10M13.5 3.500h3.500v3.500h-3.500zM3.500 13.500h3.500v3.500H3.500zM13.500 13.500h3.500v3.500h-3.500z" />
                </svg>
              </Control>
            </ControlGroup>
            <ControlGroup $blue>
              <Control aria-label="Widgets view">
                <svg width="16" height="15" fill="none" stroke="#fff">
                  <path d="M.5.5h3v14h-3zM6.5.5h3v14h-3zM12.5.5h3v14h-3z" />
                </svg>
              </Control>
              <Control aria-label="Map view">
                <svg width="14" height="18" fill="none" stroke="#1268c6">
                  <path d="M7 17C4 13 .5 10 .5 7a6.5 6.5 0 0 1 13 0C13.500 10 10 13 7 17z" />
                </svg>
              </Control>
            </ControlGroup>
          </MapControls>
        </MapCard>
        <MagWidget />
      </Canvas>

      <Annotation aria-hidden="true">
        <rect x="297" y="158" width="69" height="28" fill="none" stroke="#f00" strokeWidth="6" />
        <path d="M380 196L441 200 437 214 642 299 639 308 433 223 427 237Z" fill="#f00" />
      </Annotation>
    </Page>
  );
}

export default App;
